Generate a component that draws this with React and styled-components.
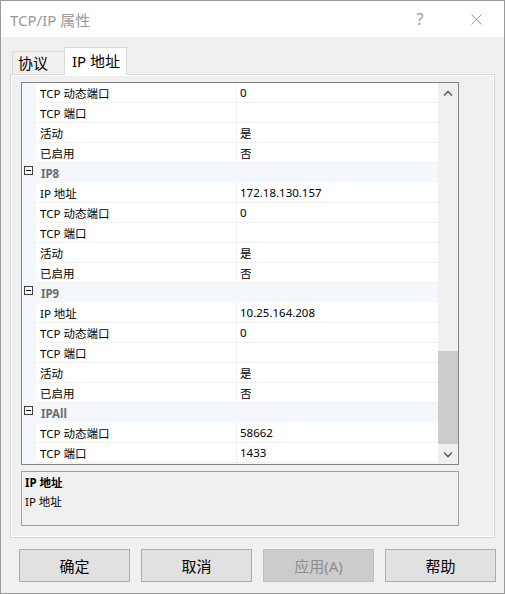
import React from 'react'
import styled, { createGlobalStyle } from 'styled-components'

const GlobalStyle = createGlobalStyle`
  html, body {
    margin: 0;
    padding: 0;
    background: #fff;
  }
  * {
    box-sizing: border-box;
  }
`

const font = `"Noto Sans", "Noto Sans CJK SC", sans-serif`

// Property rows as they are visible in the scrolled grid
const rows = [
  { name: 'TCP 动态端口', value: '0' },
  { name: 'TCP 端口', value: '' },
  { name: '活动', value: '是' },
  { name: '已启用', value: '否' },
  { category: 'IP8' },
  { name: 'IP 地址', value: '172.18.130.157' },
  { name: 'TCP 动态端口', value: '0' },
  { name: 'TCP 端口', value: '' },
  { name: '活动', value: '是' },
  { name: '已启用', value: '否' },
  { category: 'IP9' },
  { name: 'IP 地址', value: '10.25.164.208' },
  { name: 'TCP 动态端口', value: '0' },
  { name: 'TCP 端口', value: '' },
  { name: '活动', value: '是' },
  { name: '已启用', value: '否' },
  { category: 'IPAll' },
  { name: 'TCP 动态端口', value: '58662' },
  { name: 'TCP 端口', value: '1433' },
]

const buttons = [
  { label: '确定' },
  { label: '取消' },
  { label: '应用(A)', disabled: true },
  { label: '帮助' },
]

const Window = styled.div`
  width: 505px;
  height: 594px;
  border: 1px solid #9a9a9a;
  display: flex;
  flex-direction: column;
  font-family: ${font};
  background: #f0f0f0;
`

const TitleBar = styled.div`
  height: 36px;
  background: #fff;
  display: flex;
  align-items: center;
  padding-left: 9px;
`

const Title = styled.div`
  flex: 1;
  font-size: 15px;
  color: #999;
`

const CaptionButton = styled.div`
  width: 56px;
  height: 36px;
  display: flex;
  align-items: center;
  justify-content: center;
  color: #999;
  font-size: 16px;
`

const Body = styled.div`
  flex: 1;
  display: flex;
  flex-direction: column;
  padding: 10px 0 0 9px;
`

const TabStrip = styled.div`
  display: flex;
  align-items: flex-end;
  padding-left: 2px;
  margin-bottom: -1px;
  position: relative;
  z-index: 1;
`

const Tab = styled.div`
  width: ${(p) => (p.$active ? 63 : 52)}px;
  height: ${(p) => (p.$active ? 28 : 24)}px;
  padding: 0 0 ${(p) => (p.$active ? 2 : 1)}px ${(p) => (p.$active ? 7 : 5)}px;
  display: flex;
  align-items: center;
  font-size: 15px;
  color: #000;
  background: ${(p) => (p.$active ? '#fff' : '#f0f0f0')};
  border: 1px solid #d9d9d9;
  border-bottom: ${(p) => (p.$active ? 'none' : '1px solid #d9d9d9')};
  border-right: ${(p) => (p.$active ? '1px solid #d9d9d9' : 'none')};
`

const Panel = styled.div`
  width: 485px;
  height: 464px;
  border: 1px solid #d9d9d9;
  box-shadow: inset 1px 1px 0 #fff, inset -1px -1px 0 #fff;
  padding: 7px 0 0 10px;
  display: flex;
  flex-direction: column;
`

const Grid = styled.div`
  width: 438px;
  height: 383px;
  border: 1px solid #828282;
  background: #fff;
  display: flex;
  overflow: hidden;
`

const RowsArea = styled.div`
  flex: 1;
  display: flex;
  flex-direction: column;
  background: #f4f7fc;
`

const Row = styled.div`
  height: 20px;
  display: flex;
  font-size: 11.5px;
  flex-shrink: 0;
  background: ${(p) => (p.$category ? '#f4f7fc' : 'transparent')};
`

const Gutter = styled.div`
  width: 14px;
  flex-shrink: 0;
  display: flex;
  align-items: flex-start;
`

const NameCell = styled.div`
  width: 201px;
  flex-shrink: 0;
  padding-left: 4px;
  background: #fff;
  border-right: 1px solid #f0f0f0;
  border-bottom: 1px solid #f0f0f0;
  display: flex;
  align-items: center;
  color: #000;
  white-space: nowrap;
`

const ValueCell = styled.div`
  flex: 1;
  padding-left: 3px;
  background: #fff;
  border-bottom: 1px solid #f0f0f0;
  display: flex;
  align-items: center;
  color: #000;
`

const CategoryLabel = styled.div`
  padding-left: 5px;
  display: flex;
  align-items: center;
  font-weight: bold;
  color: #6d6d6d;
`

const Collapse = styled.span`
  width: 9px;
  height: 9px;
  margin: 3px 0 0 2px;
  border: 1px solid #3c3c3c;
  background: #fff;
  display: flex;
  align-items: center;
  justify-content: center;

  &::after {
    content: '';
    width: 5px;
    height: 1px;
    background: #000;
  }
`

const ScrollBar = styled.div`
  width: 20px;
  flex-shrink: 0;
  background: #f0f0f0;
  display: flex;
  flex-direction: column;
`

const ScrollArrow = styled.div`
  height: 20px;
  flex-shrink: 0;
  display: flex;
  align-items: center;
  justify-content: center;
`

const Track = styled.div`
  flex: 1;
  display: flex;
  flex-direction: column;
  justify-content: flex-end;
`

const Thumb = styled.div`
  height: 93px;
  background: #cdcdcd;
`

const Description = styled.div`
  width: 438px;
  height: 55px;
  margin-top: 6px;
  border: 1px solid #a0a0a0;
  padding: 1px 3px;
  font-size: 11.5px;
  color: #000;
`

const DescTitle = styled.div`
  font-weight: bold;
  line-height: 19px;
`

const DescText = styled.div`
  line-height: 20px;
`

const ButtonRow = styled.div`
  display: flex;
  gap: 11px;
  padding: 11px 0 0 9px;
`

const Button = styled.div`
  width: 111px;
  height: 33px;
  display: flex;
  align-items: center;
  justify-content: center;
  font-size: 15px;
  background: ${(p) => (p.$disabled ? '#cccccc' : '#e1e1e1')};
  border: 1px solid ${(p) => (p.$disabled ? '#bfbfbf' : '#adadad')};
  color: ${(p) => (p.$disabled ? '#8c8c8c' : '#000')};
`

const Chevron = ({ up }) => (
  <svg width="10" height="7" viewBox="0 0 10 7">
    <polyline
      points={up ? '1,5.5 5,1.5 9,5.5' : '1,1.5 5,5.5 9,1.5'}
      fill="none"
      stroke="#606060"
      strokeWidth="1.6"
    />
  </svg>
)

function App() {
  return (
    <>
      <GlobalStyle />
      <Window>
        <TitleBar>
          <Title>TCP/IP 属性</Title>
          <CaptionButton>?</CaptionButton>
          <CaptionButton>
            <svg width="11" height="11" viewBox="0 0 11 11">
              <path d="M0.5 0.5 L10.5 10.5 M10.5 0.5 L0.5 10.5" stroke="#999" strokeWidth="1" />
            </svg>
          </CaptionButton>
        </TitleBar>

        <Body>
          <TabStrip>
            <Tab>协议</Tab>
            <Tab $active>IP 地址</Tab>
          </TabStrip>

          <Panel>
            <Grid>
              <RowsArea>
                {rows.map((row, i) =>
                  row.category ? (
                    <Row key={i} $category>
                      <Gutter>
                        <Collapse />
                      </Gutter>
                      <CategoryLabel>{row.category}</CategoryLabel>
                    </Row>
                  ) : (
                    <Row key={i}>
                      <Gutter />
                      <NameCell>{row.name}</NameCell>
                      <ValueCell>{row.value}</ValueCell>
                    </Row>
                  )
                )}
              </RowsArea>
              <ScrollBar>
                <ScrollArrow>
                  <Chevron up />
                </ScrollArrow>
                <Track>
                  <Thumb />
                </Track>
                <ScrollArrow>
                  <Chevron />
                </ScrollArrow>
              </ScrollBar>
            </Grid>

            <Description>
              <DescTitle>IP 地址</DescTitle>
              <DescText>IP 地址</DescText>
            </Description>
          </Panel>

          <ButtonRow>
            {buttons.map((b) => (
              <Button key={b.label} $disabled={b.disabled}>
                {b.label}
              </Button>
            ))}
          </ButtonRow>
        </Body>
      </Window>
    </>
  )
}

export default App
